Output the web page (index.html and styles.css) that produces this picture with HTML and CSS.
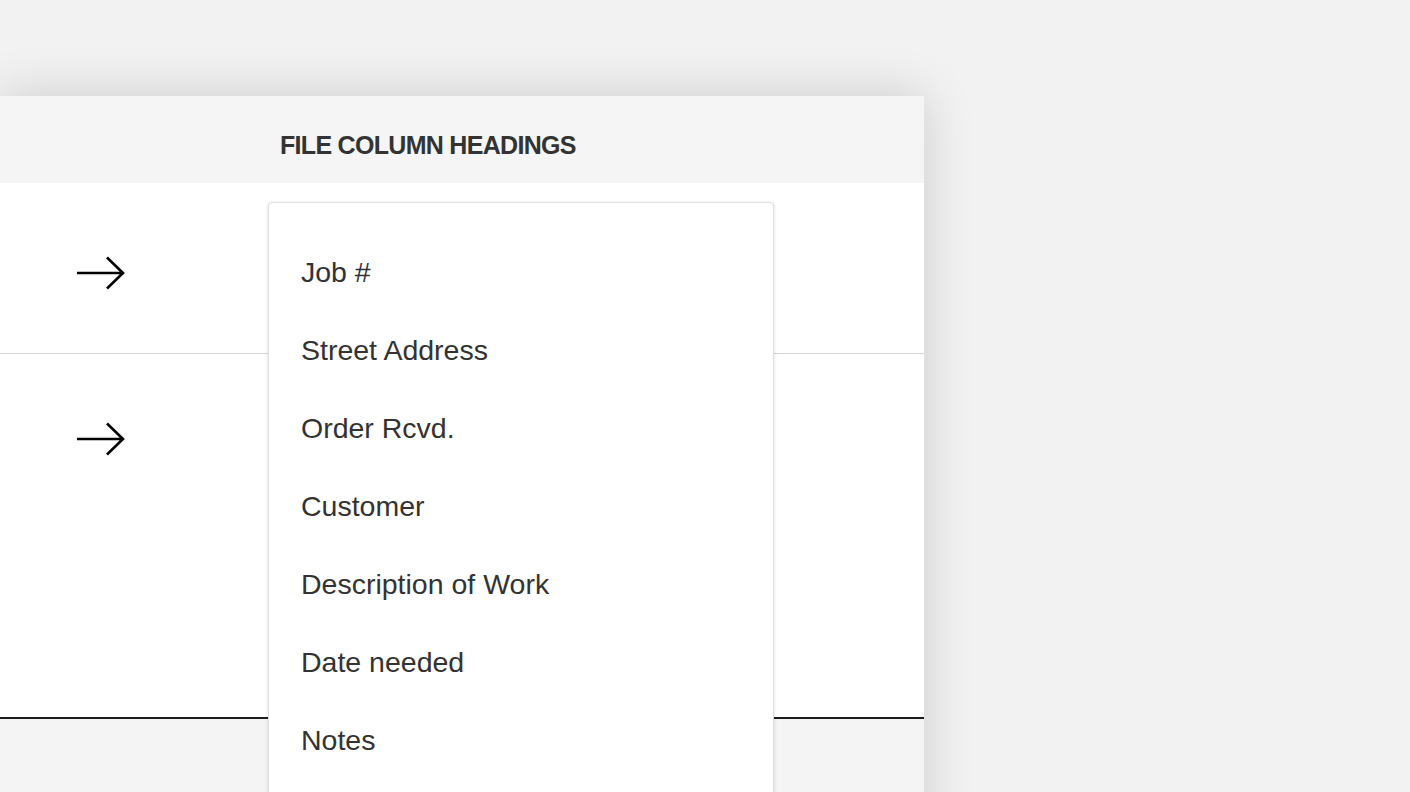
FILE: index.html
```html
<!DOCTYPE html>
<html lang="en">
<head>
    <meta charset="UTF-8">
    <meta name="viewport" content="width=device-width, initial-scale=1.0">
    <title>Map Columns</title>
    <link rel="stylesheet" href="styles.css">
</head>
<body>
    <div class="panel">
        <div class="panel-head">
            <h2 class="heading">FILE COLUMN HEADINGS</h2>
        </div>

        <div class="panel-body">
            <div class="row row-first">
                <svg class="arrow" width="50" height="34" viewBox="0 0 50 34">
                    <path d="M1 17 H47 M31 1.5 L47 17 L31 32.5" fill="none" stroke="#000" stroke-width="2.6"/>
                </svg>
            </div>
            <div class="row">
                <svg class="arrow" width="50" height="34" viewBox="0 0 50 34">
                    <path d="M1 17 H47 M31 1.5 L47 17 L31 32.5" fill="none" stroke="#000" stroke-width="2.6"/>
                </svg>
            </div>
        </div>

        <div class="panel-foot"></div>

        <!-- open column picker -->
        <ul class="menu">
            <li class="menu-item">Job #</li>
            <li class="menu-item">Street Address</li>
            <li class="menu-item">Order Rcvd.</li>
            <li class="menu-item">Customer</li>
            <li class="menu-item">Description of Work</li>
            <li class="menu-item">Date needed</li>
            <li class="menu-item">Notes</li>
        </ul>
    </div>
</body>
</html>
```

FILE: styles.css
```css
html, body {
    height: 100%;
    overflow: hidden;
}

body {
    margin: 0;
    background-color: #f2f2f2;
    font-family: "Liberation Sans", Arial, sans-serif;
    color: #333333;
}

.panel {
    position: relative;
    width: 924px;
    margin-top: 96px;
    background-color: #ffffff;
    box-shadow: 0 0 48px rgba(0, 0, 0, 0.16);
}

.panel-head {
    height: 87px;
    display: flex;
    align-items: center;
    padding-left: 280px;
    background-color: #f5f5f5;
}

.heading {
    margin: 0;
    margin-top: 12px;
    font-size: 25px;
    font-weight: bold;
    letter-spacing: -0.7px;
    color: #333333;
}

.panel-body {
    height: 534px;
    border-bottom: 2px solid #1c1c1c;
}

.row {
    height: 170px;
    box-sizing: border-box;
    display: flex;
    align-items: center;
    padding-left: 76px;
}

.row-first {
    height: 171px;
    padding-top: 10px;
    border-bottom: 1px solid #d4d4d4;
}

.arrow {
    display: block;
}

.panel-foot {
    height: 140px;
    background-color: #f4f4f4;
}

.menu {
    position: absolute;
    top: 106px;
    left: 268px;
    width: 506px;
    height: 640px;
    box-sizing: border-box;
    margin: 0;
    padding: 30px 0 0 0;
    list-style: none;
    background-color: #ffffff;
    border: 1px solid #dedede;
    border-radius: 4px;
    box-shadow: 0 1px 4px rgba(0, 0, 0, 0.12);
}

.menu-item {
    height: 78px;
    line-height: 78px;
    padding-left: 32px;
    font-size: 28.5px;
    color: #333333;
}
```
